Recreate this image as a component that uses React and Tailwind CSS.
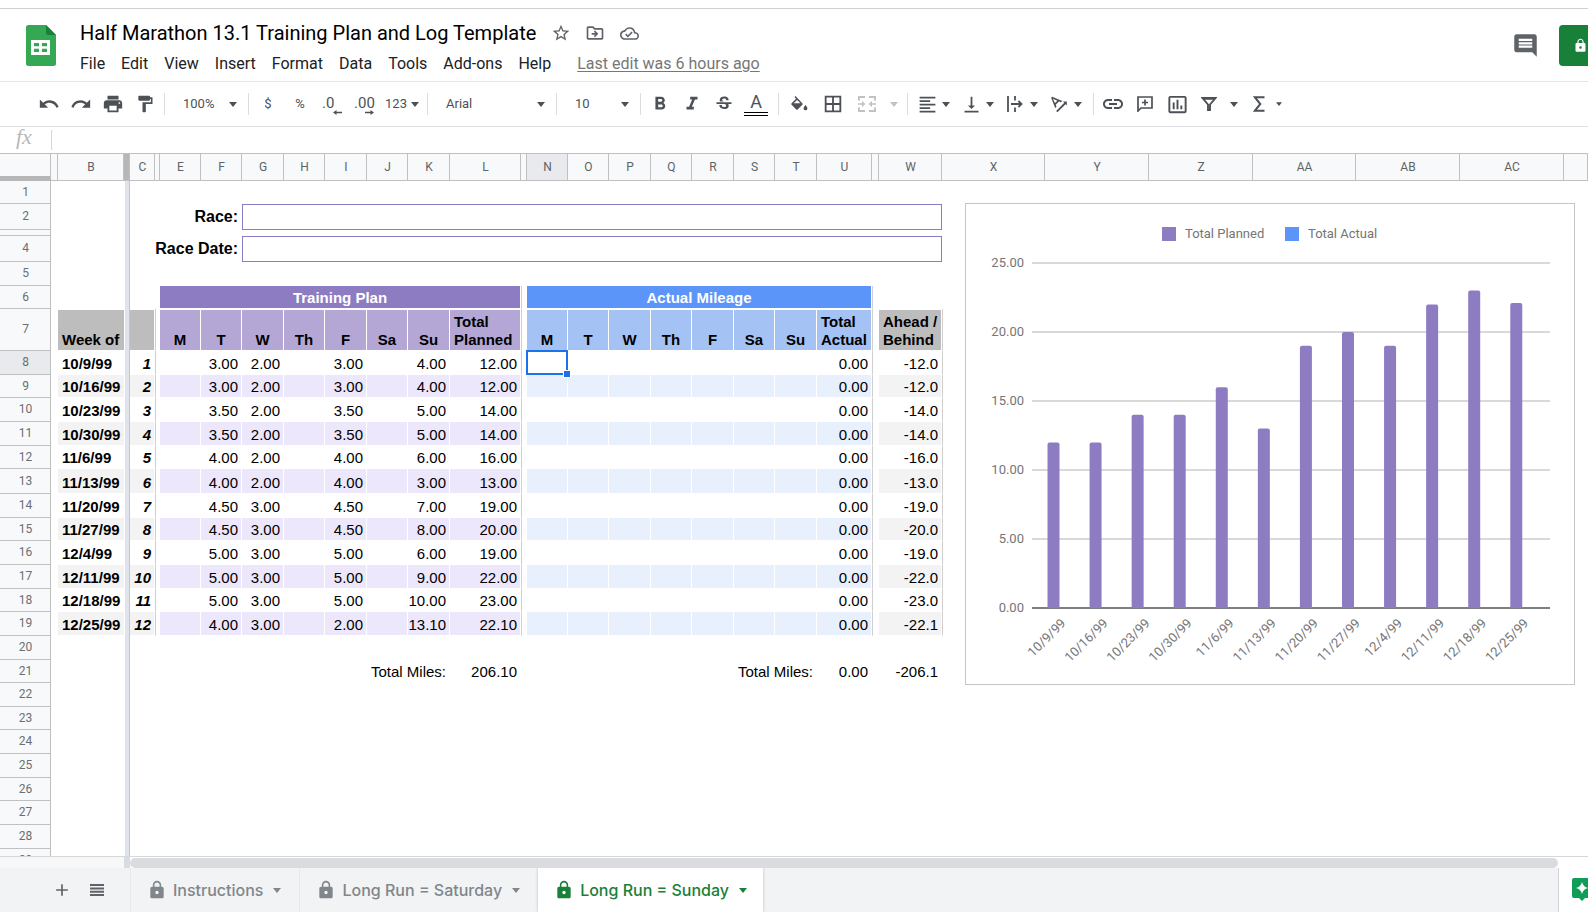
import clsx from 'clsx';
import {
  MdAdd,
  MdBorderAll,
  MdComment,
  MdFormatAlignLeft,
  MdFormatBold,
  MdFormatItalic,
  MdFormatPaint,
  MdInsertChartOutlined,
  MdLink,
  MdLock,
  MdOutlineCloudDone,
  MdOutlineDriveFileMove,
  MdPrint,
  MdRedo,
  MdStarBorder,
  MdStrikethroughS,
  MdTextRotationAngleup,
  MdUndo,
  MdVerticalAlignBottom,
} from 'react-icons/md';

const MENUS = ['File', 'Edit', 'View', 'Insert', 'Format', 'Data', 'Tools', 'Add-ons', 'Help'];

// Column widths in px, "|" is the freeze bar. The last column takes what is left.
const COLUMNS = [
  ['A', 7], ['B', 66], ['|', 6], ['C', 25], ['D', 5],
  ['E', 41], ['F', 41], ['G', 42], ['H', 41], ['I', 42], ['J', 41], ['K', 42], ['L', 71], ['M', 6],
  ['N', 41], ['O', 41], ['P', 42], ['Q', 41], ['R', 42], ['S', 41], ['T', 42], ['U', 55], ['V', 7],
  ['W', 63], ['X', 103], ['Y', 104], ['Z', 104], ['AA', 103], ['AB', 104], ['AC', 104], ['AD', null],
];

// Too narrow to show their letter
const HIDDEN_LETTERS = ['A', 'D', 'M', 'V', 'AD'];

const DAYS = ['M', 'T', 'W', 'Th', 'F', 'Sa', 'Su'];

const WEEKS = [
  { date: '10/9/99',  h: 24, plan: ['', '3.00', '2.00', '', '3.00', '', '4.00'],  total: '12.00', diff: '-12.0' },
  { date: '10/16/99', h: 23, plan: ['', '3.00', '2.00', '', '3.00', '', '4.00'],  total: '12.00', diff: '-12.0' },
  { date: '10/23/99', h: 24, plan: ['', '3.50', '2.00', '', '3.50', '', '5.00'],  total: '14.00', diff: '-14.0' },
  { date: '10/30/99', h: 24, plan: ['', '3.50', '2.00', '', '3.50', '', '5.00'],  total: '14.00', diff: '-14.0' },
  { date: '11/6/99',  h: 23, plan: ['', '4.00', '2.00', '', '4.00', '', '6.00'],  total: '16.00', diff: '-16.0' },
  { date: '11/13/99', h: 25, plan: ['', '4.00', '2.00', '', '4.00', '', '3.00'],  total: '13.00', diff: '-13.0' },
  { date: '11/20/99', h: 24, plan: ['', '4.50', '3.00', '', '4.50', '', '7.00'],  total: '19.00', diff: '-19.0' },
  { date: '11/27/99', h: 23, plan: ['', '4.50', '3.00', '', '4.50', '', '8.00'],  total: '20.00', diff: '-20.0' },
  { date: '12/4/99',  h: 24, plan: ['', '5.00', '3.00', '', '5.00', '', '6.00'],  total: '19.00', diff: '-19.0' },
  { date: '12/11/99', h: 24, plan: ['', '5.00', '3.00', '', '5.00', '', '9.00'],  total: '22.00', diff: '-22.0' },
  { date: '12/18/99', h: 23, plan: ['', '5.00', '3.00', '', '5.00', '', '10.00'], total: '23.00', diff: '-23.0' },
  { date: '12/25/99', h: 24, plan: ['', '4.00', '3.00', '', '2.00', '', '13.10'], total: '22.10', diff: '-22.1' },
];

const EMPTY_ROWS = [[22, 24], [23, 23], [24, 24], [25, 24], [26, 23], [27, 24], [28, 24], [29, 24]];

// ── Small drawings ──────────────────────────────────────────────────────────

function Caret({ small }) {
  return (
    <svg width={small ? 6 : 8} height={small ? 4 : 5} viewBox="0 0 8 5" className="shrink-0" aria-hidden="true">
      <path d="M0 0h8L4 5z" fill="currentColor" />
    </svg>
  );
}

function SheetsLogo() {
  return (
    <svg width="30" height="41" viewBox="0 0 30 41" aria-label="Sheets" className="mt-4 shrink-0">
      <path d="M2.500 0H20l10 10v28.500a2.500 2.500 0 0 1-2.500 2.500h-25A2.500 2.500 0 0 1 0 38.500v-36A2.500 2.500 0 0 1 2.500 0z" fill="#34a853" />
      <path d="M20 0l10 10h-7.500A2.500 2.500 0 0 1 20 7.500z" fill="#188038" />
      <path
        d="M5 15h19v15H5zM8 18v3.200h5V18zM16 18v3.200h5V18zM8 23.800V27h5v-3.200zM16 23.800V27h5v-3.200z"
        fill="#fff"
        fillRule="evenodd"
      />
    </svg>
  );
}

function FillIcon() {
  return (
    <svg width="17" height="16" viewBox="0 0 17 16" fill="currentColor" aria-hidden="true">
      <path d="M4.500 0L3.400 1.100l1.700 1.700L.6 7.300a1.100 1.100 0 0 0 0 1.500l4.600 4.600a1.100 1.100 0 0 0 1.500 0l4.600-4.600a1.100 1.100 0 0 0 0-1.500zM2.700 7.300L6.100 3.900l3.400 3.400zM14.500 9s-1.900 2.100-1.900 3.400a1.900 1.900 0 0 0 3.800 0C16.400 11.100 14.500 9 14.500 9z" />
    </svg>
  );
}

function MergeIcon() {
  return (
    <svg width="18" height="16" viewBox="0 0 18 16" fill="none" stroke="currentColor" strokeWidth="2" aria-hidden="true">
      <path d="M1 4.500V1h6M11 1h6v3.500M1 11.500V15h6M11 15h6v-3.500" />
      <path d="M0 8h6M18 8h-6" strokeWidth="1.500" />
      <path d="M4 5l3.500 3L4 11zM14 5l-3.500 3 3.500 3z" fill="currentColor" stroke="none" />
    </svg>
  );
}

function OverflowIcon() {
  return (
    <svg width="16" height="16" viewBox="0 0 16 16" fill="none" stroke="currentColor" strokeWidth="1.800" aria-hidden="true">
      <path d="M1 0v16M8 0v4.500M8 11.500V16M4 8h10M11.500 5l3 3-3 3" />
    </svg>
  );
}

function CommentPlusIcon() {
  return (
    <svg width="16" height="16" viewBox="0 0 16 16" fill="none" stroke="currentColor" strokeWidth="1.700" aria-hidden="true">
      <path d="M1 1h14v11H4l-3 3zM8 3.500v6M5 6.500h6" />
    </svg>
  );
}

function FilterIcon() {
  return (
    <svg width="16" height="14" viewBox="0 0 16 14" fill="none" stroke="currentColor" strokeWidth="1.900" aria-hidden="true">
      <path d="M1.500 1h13L9 7.500V13H7V7.500z" />
      <path d="M3 1.500h10" strokeWidth="2.500" />
    </svg>
  );
}

function SigmaIcon() {
  return (
    <svg width="12" height="16" viewBox="0 0 12 16" fill="none" stroke="currentColor" strokeWidth="2" aria-hidden="true">
      <path d="M11.500 1.200H1.800L7.300 8l-5.500 6.800h9.700" />
    </svg>
  );
}

function DecimalArrow({ right }) {
  return (
    <svg width="9" height="5" viewBox="0 0 9 5" className="absolute right-0 bottom-0" aria-hidden="true">
      <path
        d={right ? 'M0 1.800h5.500V0L9 2.500 5.500 5V3.200H0z' : 'M9 1.800H3.500V0L0 2.500 3.500 5V3.200H9z'}
        fill="currentColor"
      />
    </svg>
  );
}

// ── Header ──────────────────────────────────────────────────────────────────

function Header() {
  return (
    <header className="mt-2 flex h-[74px] shrink-0 overflow-hidden border-y border-t-[#d0d0d0] border-b-[#e4e5e7] pl-[26px]">
      <SheetsLogo />
      <div className="min-w-0 flex-1 pt-3 pl-4">
        <div className="flex h-6 items-center pl-2">
          <h1 className="text-[20px] leading-6 whitespace-nowrap text-black">
            Half Marathon 13.1 Training Plan and Log Template
          </h1>
          <div className="ml-3.5 flex items-center gap-3 text-[#5f6368]">
            <button aria-label="Star" className="flex w-[22px] justify-center"><MdStarBorder size={20} /></button>
            <button aria-label="Move" className="flex w-[22px] justify-center"><MdOutlineDriveFileMove size={20} /></button>
            <button aria-label="Saved" className="flex w-[22px] justify-center"><MdOutlineCloudDone size={19} /></button>
          </div>
        </div>
        <nav className="mt-[7px] flex h-6 items-center text-[16px] whitespace-nowrap text-[#202124]">
          {MENUS.map((m) => (
            <button key={m} className="px-2">{m}</button>
          ))}
          <a href="#history" className="ml-[18px] text-[#777] underline underline-offset-2">
            Last edit was 6 hours ago
          </a>
        </nav>
      </div>
      <button aria-label="Comments" className="mt-[22px] mr-5 flex h-7 items-center text-[#5f6368]">
        <MdComment size={27} />
      </button>
      <button
        aria-label="Share"
        className="mt-4 flex h-[41px] w-[29px] items-center justify-end overflow-hidden rounded-l bg-[#188038] text-white"
      >
        <MdLock size={15} />
      </button>
    </header>
  );
}

// ── Toolbar ─────────────────────────────────────────────────────────────────

function Tool({ label, className, children }) {
  return (
    <button aria-label={label} className={clsx('flex h-8 shrink-0 items-center justify-center', className || 'w-8')}>
      {children}
    </button>
  );
}

function SplitTool({ label, children }) {
  return (
    <button aria-label={label} className="flex h-8 w-11 shrink-0 items-center">
      <span className="flex w-[28px] justify-center pr-0.5">{children}</span>
      <Caret />
    </button>
  );
}

function Picker({ label, value, className }) {
  return (
    <div className={clsx('relative flex shrink-0 items-center', className)}>
      <select aria-label={label} defaultValue={value} className="w-full appearance-none bg-transparent pl-[15px] outline-none">
        <option>{value}</option>
      </select>
      <span className="pointer-events-none absolute right-2"><Caret /></span>
    </div>
  );
}

function Divider() {
  return <span className="mx-[3px] h-[22px] w-px shrink-0 bg-[#dadce0]" />;
}

function Toolbar() {
  return (
    <div
      role="toolbar"
      className="flex h-[45px] shrink-0 items-center overflow-hidden border-b border-[#e0e2e5] pl-[33px] text-[13px] text-[#4d5156]"
    >
      <Tool label="Undo"><MdUndo size={22} /></Tool>
      <Tool label="Redo"><MdRedo size={22} /></Tool>
      <Tool label="Print"><MdPrint size={22} /></Tool>
      <Tool label="Paint format"><MdFormatPaint size={20} /></Tool>
      <Divider />
      <Picker label="Zoom" value="100%" className="w-[77px]" />
      <Divider />
      <Tool label="Currency">$</Tool>
      <Tool label="Percent">%</Tool>
      <Tool label="Decrease decimals">
        <span className="relative w-5 pb-0.5 text-left text-[15px] leading-5">.0<DecimalArrow /></span>
      </Tool>
      <Tool label="Increase decimals">
        <span className="relative w-5 pb-0.5 text-left text-[15px] leading-5">.00<DecimalArrow right /></span>
      </Tool>
      <Tool label="More formats" className="w-11 gap-1">123<Caret /></Tool>
      <Divider />
      <Picker label="Font" value="Arial" className="w-[122px]" />
      <Divider />
      <Picker label="Font size" value="10" className="w-[77px]" />
      <Divider />
      <Tool label="Bold"><MdFormatBold size={22} /></Tool>
      <Tool label="Italic"><MdFormatItalic size={22} /></Tool>
      <Tool label="Strikethrough"><MdStrikethroughS size={20} /></Tool>
      <Tool label="Text color" className="mr-[3px] w-8 flex-col">
        <span className="text-[18px] leading-5">A</span>
        <span className="h-1 w-6 border-y border-black" />
      </Tool>
      <Divider />
      <Tool label="Fill color" className="w-[34px]"><FillIcon /></Tool>
      <Tool label="Borders" className="w-[34px]"><MdBorderAll size={22} /></Tool>
      <Tool label="Merge cells" className="w-[34px] text-[#c0c2c5]"><MergeIcon /></Tool>
      <Tool label="Merge options" className="w-5 text-[#c0c2c5]"><Caret /></Tool>
      <Divider />
      <div className="flex pl-[3px]">
        <SplitTool label="Horizontal align"><MdFormatAlignLeft size={21} /></SplitTool>
        <SplitTool label="Vertical align"><MdVerticalAlignBottom size={21} /></SplitTool>
        <SplitTool label="Text wrapping"><OverflowIcon /></SplitTool>
        <SplitTool label="Text rotation"><MdTextRotationAngleup size={22} /></SplitTool>
      </div>
      <Divider />
      <Tool label="Insert link"><MdLink size={24} /></Tool>
      <Tool label="Insert comment"><CommentPlusIcon /></Tool>
      <Tool label="Insert chart"><MdInsertChartOutlined size={23} /></Tool>
      <Tool label="Filter"><FilterIcon /></Tool>
      <Tool label="Filter views" className="w-[18px]"><Caret /></Tool>
      <Tool label="Functions"><SigmaIcon /></Tool>
      <Tool label="More functions" className="w-2"><Caret small /></Tool>
    </div>
  );
}

function FormulaBar() {
  return (
    <div className="flex h-[26px] shrink-0 items-center">
      <label
        htmlFor="formula"
        className="h-[26px] w-[51px] pl-4 font-['Liberation_Serif',serif] text-[22px] leading-5 text-[#b8b8b8] italic"
      >
        fx
      </label>
      <input id="formula" className="h-5 flex-1 border-l border-[#d5d7da] px-2 text-[13px] outline-none" />
    </div>
  );
}

// ── Sheet ───────────────────────────────────────────────────────────────────

function RowHead({ n, selected }) {
  return (
    <th
      scope="row"
      className={clsx(
        'border-r border-b border-[#c0c0c0] p-0 pb-px pl-px text-center align-middle font-[Roboto,sans-serif] text-[12px] leading-4 font-normal text-[#6b6f73]',
        selected ? 'bg-[#e8eaed]' : 'bg-[#f8f9fa]',
      )}
    >
      {n}
    </th>
  );
}

function FreezeCell() {
  return <td className="border-r border-l border-r-[#c4c6cc] border-l-white bg-[#dfe3eb] p-0" />;
}

// Narrow spacer column that carries the grey rule on its left side
function RuleCell() {
  return <td className="border-b border-l border-b-white border-l-[#cfcfcf] p-0" />;
}

function Cell({ children, className, ...rest }) {
  return (
    <td
      className={clsx('border-r border-b border-white p-0 pr-[3px] pb-px text-right align-bottom whitespace-nowrap', className)}
      {...rest}
    >
      {children}
    </td>
  );
}

function HeadCell({ children, className }) {
  return (
    <th scope="col" className={clsx('border-r border-b border-white p-0 pb-px align-bottom', className)}>
      {children}
    </th>
  );
}

function RaceRow({ n, id, label }) {
  return (
    <tr className="h-[26px]">
      <RowHead n={n} />
      <td colSpan={2} />
      <FreezeCell />
      <td colSpan={4} className="p-0 pr-1 text-right text-[16px] font-bold whitespace-nowrap">
        <label htmlFor={id}>{label}</label>
      </td>
      <td colSpan={17} className="p-0">
        <input id={id} className="block h-[26px] w-full border border-[#8e7cc3] px-1 text-[15px] outline-none" />
      </td>
      <td colSpan={7} />
    </tr>
  );
}

function BlankRow({ n, height }) {
  return (
    <tr style={{ height }}>
      <RowHead n={n} />
      <td colSpan={2} className="p-0" />
      <FreezeCell />
      <td colSpan={28} className="p-0" />
    </tr>
  );
}

function WeekRow({ week, index }) {
  const shaded = index % 2 === 1;
  const gray = shaded && 'bg-[#f3f3f3]';
  const purple = shaded && 'bg-[#ede7fc]';
  const blue = shaded && 'bg-[#e8f0fe]';

  return (
    <tr style={{ height: week.h }}>
      <RowHead n={index + 8} selected={index === 0} />
      <td className="p-0" />
      <td className={clsx('border-b border-white p-0 pb-px pl-1 text-left align-bottom font-bold whitespace-nowrap', gray)}>
        {week.date}
      </td>
      <FreezeCell />
      <Cell className={clsx('font-bold italic', gray)}>{index + 1}</Cell>
      <RuleCell />
      {week.plan.map((miles, i) => (
        <Cell key={i} className={purple}>{miles}</Cell>
      ))}
      <Cell className={purple}>{week.total}</Cell>
      <RuleCell />
      {DAYS.map((day, i) => (
        <Cell key={day} className={clsx(blue, index === 0 && i === 0 && 'relative')}>
          {index === 0 && i === 0 && (
            <>
              <span className="absolute -inset-px border-2 border-[#1a73e8]" />
              <span className="absolute -right-1 -bottom-1 size-2 border border-white bg-[#1a73e8]" />
            </>
          )}
        </Cell>
      ))}
      <Cell className={blue}>0.00</Cell>
      <RuleCell />
      <Cell className={gray}>{week.diff}</Cell>
      <RuleCell />
      <td colSpan={6} className="p-0" />
    </tr>
  );
}

function Sheet() {
  return (
    <table className="w-full table-fixed border-separate border-spacing-0 bg-white font-['Liberation_Sans',Arial,sans-serif] text-[15px] leading-[18px] text-black">
      <colgroup>
        <col style={{ width: 51 }} />
        {COLUMNS.map(([name, width]) => (
          <col key={name} style={width ? { width } : undefined} />
        ))}
      </colgroup>
      <thead>
        <tr className="h-7">
          <td className="border-t border-r border-b-5 border-t-[#c0c0c0] border-r-[#c0c0c0] border-b-[#b7b7b7] bg-[#f8f9fa] p-0" />
          {COLUMNS.map(([name]) => (
            <th
              key={name}
              scope="col"
              className={clsx(
                'border-t border-r border-b border-[#c0c0c0] p-0 pl-px text-center align-middle font-[Roboto,sans-serif] text-[12px] font-normal text-[#5f6368]',
                name === '|' && 'bg-[#b7b7b7]',
                name === 'N' && 'bg-[#e8eaed]',
                name !== '|' && name !== 'N' && 'bg-[#f8f9fa]',
              )}
            >
              {name !== '|' && !HIDDEN_LETTERS.includes(name) && name}
            </th>
          ))}
        </tr>
      </thead>
      <tbody>
        <BlankRow n={1} height={23} />
        <RaceRow n={2} id="race" label="Race:" />
        <BlankRow height={6} />
        <RaceRow n={4} id="race-date" label="Race Date:" />
        <BlankRow n={5} height={24} />

        {/* Section titles */}
        <tr className="h-[23px]">
          <RowHead n={6} />
          <td colSpan={2} className="p-0" />
          <FreezeCell />
          <td colSpan={2} className="p-0" />
          <th colSpan={8} className="border-r border-b border-white bg-[#8e7cc3] p-0 pt-0.5 text-white">Training Plan</th>
          <RuleCell />
          <th colSpan={8} className="border-r border-b border-white bg-[#5b95f9] p-0 pt-0.5 text-white">Actual Mileage</th>
          <RuleCell />
          <td colSpan={8} className="p-0" />
        </tr>

        {/* Column titles */}
        <tr className="h-[42px]">
          <RowHead n={7} />
          <td className="p-0" />
          <th scope="col" className="border-y border-white bg-[#bdbdbd] p-0 pb-px pl-1 text-left align-bottom whitespace-nowrap">
            Week of
          </th>
          <FreezeCell />
          <Cell className="border-t bg-[#bdbdbd]" />
          <RuleCell />
          {DAYS.map((day) => (
            <HeadCell key={day} className="border-t bg-[#b4a7d6]">{day}</HeadCell>
          ))}
          <HeadCell className="border-t bg-[#b4a7d6] pl-1 text-left">Total<br />Planned</HeadCell>
          <RuleCell />
          {DAYS.map((day) => (
            <HeadCell key={day} className="border-t bg-[#a4c2f4]">{day}</HeadCell>
          ))}
          <HeadCell className="border-t bg-[#a4c2f4] pl-1 text-left">Total<br />Actual</HeadCell>
          <RuleCell />
          <HeadCell className="border-t bg-[#bdbdbd] pl-1 text-left">Ahead /<br />Behind</HeadCell>
          <RuleCell />
          <td colSpan={6} className="p-0" />
        </tr>

        {WEEKS.map((week, i) => (
          <WeekRow key={week.date} week={week} index={i} />
        ))}

        <BlankRow n={20} height={24} />
        <tr className="h-[23px]">
          <RowHead n={21} />
          <td colSpan={2} className="p-0" />
          <FreezeCell />
          <Cell colSpan={9}>Total Miles:</Cell>
          <Cell>206.10</Cell>
          <Cell colSpan={8}>Total Miles:</Cell>
          <Cell>0.00</Cell>
          <Cell colSpan={2}>-206.1</Cell>
          <td colSpan={7} className="p-0" />
        </tr>
        {EMPTY_ROWS.map(([n, height]) => (
          <BlankRow key={n} n={n} height={height} />
        ))}
      </tbody>
    </table>
  );
}

// ── Chart ───────────────────────────────────────────────────────────────────

const CHART_BASE = 405;
const PX_PER_MILE = 13.8;

function MileageChart() {
  return (
    <svg
      width="610"
      height="482"
      viewBox="0 0 610 482"
      role="img"
      aria-label="Planned and actual mileage per week"
      className="absolute top-[50px] left-[965px] bg-white font-[Roboto,sans-serif] text-[13px]"
    >
      <rect x="0.5" y="0.5" width="609" height="481" fill="none" stroke="#c4c4c4" />

      <rect x="197" y="24" width="14" height="14" fill="#8e7cc3" />
      <text x="220" y="35" fill="#757575">Total Planned</text>
      <rect x="320" y="24" width="14" height="14" fill="#5b95f9" />
      <text x="343" y="35" fill="#757575">Total Actual</text>

      {[25, 20, 15, 10, 5, 0].map((tick) => {
        const y = CHART_BASE - tick * PX_PER_MILE;
        return (
          <g key={tick}>
            <line x1="67" x2="585" y1={y} y2={y} stroke={tick ? '#cccccc' : '#555555'} strokeWidth="1.500" />
            <text x="59" y={y + 4} textAnchor="end" fill="#757575">{tick.toFixed(2)}</text>
          </g>
        );
      })}

      {WEEKS.map((week, i) => {
        const x = 88.5 + i * 42.07;
        const h = Number(week.total) * PX_PER_MILE;
        return (
          <g key={week.date}>
            <path
              d={`M${x - 6} ${CHART_BASE}v${2 - h}q0-2 2-2h8q2 0 2 2v${h - 2}z`}
              fill="#8e7cc3"
            />
            <text transform={`translate(${x + 13} 421) rotate(-45)`} textAnchor="end" fill="#757575">
              {week.date}
            </text>
          </g>
        );
      })}
    </svg>
  );
}

// ── Bottom bar ──────────────────────────────────────────────────────────────

function SheetTab({ name, active }) {
  return (
    <button
      className={clsx(
        'flex shrink-0 items-center pl-4 font-[Inter,sans-serif] text-[16px] font-medium whitespace-nowrap',
        active ? 'bg-white pr-4 text-[#188038] shadow-[0_0_3px_#bbb]' : 'border-l border-[#e6e8ea] pr-[18px] text-[#80868b]',
      )}
    >
      <MdLock size={20} className="mr-1.5" />
      {name}
      <span className="ml-2.5"><Caret /></span>
    </button>
  );
}

function BottomBar() {
  return (
    <>
      <div className="flex h-3 shrink-0 border-t border-[#d5d7da]">
        <div className="w-[124px] bg-[#f8f8f8]" />
        <div className="w-1.5 bg-[#d8dce4]" />
        <div className="mt-px mr-[30px] flex-1 rounded-full bg-[#dadce0]" />
      </div>
      <footer className="flex h-11 shrink-0 overflow-hidden bg-[#f1f3f4] text-[#5f6368]">
        <div className="flex w-[130px] shrink-0 items-center gap-3 pl-[52px]">
          <button aria-label="Add sheet"><MdAdd size={20} /></button>
          <button aria-label="All sheets" className="pl-1.5">
            <svg width="14" height="12" viewBox="0 0 14 12" fill="currentColor" aria-hidden="true">
              <path d="M0 0h14v2H0zM0 3.400h14v2H0zM0 6.700h14v2H0zM0 10h14v2H0z" />
            </svg>
          </button>
        </div>
        <SheetTab name="Instructions" />
        <SheetTab name="Long Run = Saturday" />
        <SheetTab name="Long Run = Sunday" active />
        <div className="flex-1" />
        <button aria-label="Explore" className="w-[30px] overflow-hidden border-l border-[#d0d2d5] bg-white pl-[13px]">
          <svg width="24" height="24" viewBox="0 0 24 24" aria-hidden="true">
            <path d="M2 0h18a2 2 0 0 1 2 2v16a2 2 0 0 1-2 2h-7l-3 3-3-3H2a2 2 0 0 1-2-2V2a2 2 0 0 1 2-2z" fill="#0f9d58" />
            <path d="M10 4q1.200 5 6 6-4.800 1-6 6-1.200-5-6-6 4.800-1 6-6z" fill="#fff" />
          </svg>
        </button>
      </footer>
    </>
  );
}

export default function App() {
  return (
    <div className="flex h-screen flex-col overflow-hidden bg-white font-[Roboto,sans-serif]">
      <Header />
      <Toolbar />
      <FormulaBar />
      <main className="relative min-h-0 flex-1 overflow-hidden">
        <Sheet />
        <MileageChart />
      </main>
      <BottomBar />
    </div>
  );
}
